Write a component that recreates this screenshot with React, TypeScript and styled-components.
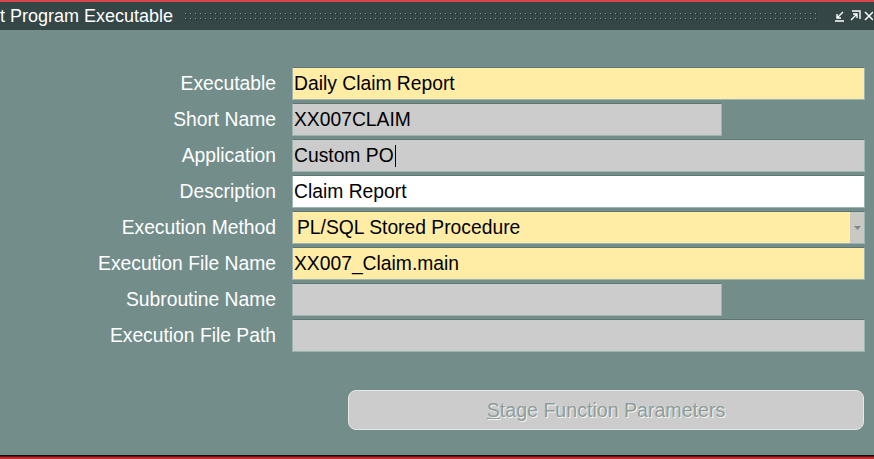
import styled, { createGlobalStyle } from 'styled-components';

const GlobalStyle = createGlobalStyle`
  html, body {
    margin: 0;
    padding: 0;
    background: #728d8a;
    overflow: hidden;
  }
`;

const Window = styled.div`
  width: 874px;
  height: 459px;
  display: flex;
  flex-direction: column;
  background: #728d8a;
  font-family: "Liberation Sans", Arial, sans-serif;
  border-top: 2px solid #d9474a;
  box-sizing: border-box;
  overflow: hidden;
`;

const TitleBar = styled.div`
  height: 28px;
  background: #344646;
  display: flex;
  align-items: center;
  gap: 10px;
  padding-right: 1px;
  flex-shrink: 0;
`;

const Title = styled.span`
  color: #fff;
  font-size: 18px;
  white-space: nowrap;
  margin-left: 0;
`;

const Dots = styled.div`
  flex: 1;
  height: 10px;
  margin-right: 6px;
  background-image:
    radial-gradient(circle, #8a9a98 0.8px, transparent 1px),
    radial-gradient(circle, #1e2a2a 0.8px, transparent 1px);
  background-size: 5px 5px, 5px 5px;
  background-position: 0 0, 1px 1px;
`;

const Controls = styled.div`
  display: flex;
  align-items: center;
  gap: 3px;
`;

const Body = styled.div`
  flex: 1;
  display: flex;
  flex-direction: column;
  padding-top: 37px;
`;

const Form = styled.div`
  display: grid;
  grid-template-columns: 276px 1fr;
  column-gap: 16px;
  row-gap: 3px;
  padding-right: 9px;
`;

const Label = styled.div`
  color: #fff;
  font-size: 19.3px;
  text-align: right;
  display: flex;
  align-items: center;
  justify-content: flex-end;
  height: 33px;
`;

const Field = styled.div<{ $bg: string; $short?: boolean }>`
  height: 33px;
  box-sizing: border-box;
  width: ${(p) => (p.$short ? '430px' : '573px')};
  background: ${(p) => p.$bg};
  border: 1px solid #9fb3b0;
  border-top-color: #5f7572;
  display: flex;
  align-items: center;
  padding-left: 1px;
  font-size: 19.3px;
  color: #000;
  position: relative;
`;

const Caret = styled.span`
  display: inline-block;
  width: 1px;
  height: 22px;
  background: #000;
  margin-left: 1px;
`;

const SelectArrow = styled.div`
  position: absolute;
  right: 0;
  top: 0;
  bottom: 0;
  width: 14px;
  background: #c9c9c4;
  display: flex;
  align-items: center;
  justify-content: center;
`;

const ButtonRow = styled.div`
  display: flex;
  padding-left: 348px;
  padding-top: 38px;
`;

const StageButton = styled.div`
  width: 516px;
  height: 40px;
  box-sizing: border-box;
  border-radius: 8px;
  background: #cccccc;
  border: 1px solid #e6e6e6;
  display: flex;
  align-items: center;
  justify-content: center;
  font-size: 19.6px;
  color: #8d9d9b;
  text-shadow: 1px 1px 0 #f4f4f4;
`;

const Underline = styled.span`
  text-decoration: underline;
`;

const BottomEdge = styled.div`
  height: 4px;
  box-sizing: border-box;
  border-top: 1px solid #111;
  border-bottom: 2px solid #c8242a;
  background: #5a1a1a;
  flex-shrink: 0;
  margin-top: auto;
`;

const rows: { label: string; value?: string; bg: string; short?: boolean; caret?: boolean; select?: boolean; indent?: number }[] = [
  { label: 'Executable', value: 'Daily Claim Report', bg: '#ffeda6' },
  { label: 'Short Name', value: 'XX007CLAIM', bg: '#cccccc', short: true },
  { label: 'Application', value: 'Custom PO', bg: '#cccccc', caret: true },
  { label: 'Description', value: 'Claim Report', bg: '#ffffff' },
  { label: 'Execution Method', value: 'PL/SQL Stored Procedure', bg: '#ffeda6', select: true, indent: 4 },
  { label: 'Execution File Name', value: 'XX007_Claim.main', bg: '#ffeda6' },
  { label: 'Subroutine Name', bg: '#cccccc', short: true },
  { label: 'Execution File Path', bg: '#cccccc' },
];

export default function App() {
  return (
    <>
      <GlobalStyle />
      <Window>
        <TitleBar>
          <Title>t Program Executable</Title>
          <Dots />
          <Controls>
            <svg width="12" height="12" viewBox="0 0 12 12">
              <path d="M9 2 L3 8 M3 4 V8 H7 M1 11 H10" stroke="#fff" strokeWidth="1.4" fill="none" />
            </svg>
            <svg width="12" height="12" viewBox="0 0 12 12">
              <path d="M2 10 L8 4 M4 4 H8 V8 M3 1 H11 V9" stroke="#fff" strokeWidth="1.4" fill="none" />
            </svg>
            <svg width="9" height="12" viewBox="0 0 9 12">
              <path d="M1 2 L9 10 M9 2 L1 10" stroke="#fff" strokeWidth="1.5" fill="none" />
            </svg>
          </Controls>
        </TitleBar>
        <Body>
          <Form>
            {rows.map((r) => (
              <>
                <Label key={r.label + '-l'}>{r.label}</Label>
                <Field key={r.label + '-f'} $bg={r.bg} $short={r.short} style={r.indent ? { paddingLeft: r.indent } : undefined}>
                  {r.value}
                  {r.caret && <Caret />}
                  {r.select && (
                    <SelectArrow>
                      <svg width="7" height="4" viewBox="0 0 7 4">
                        <path d="M0 0 H7 L3.5 4 Z" fill="#7d8a88" />
                      </svg>
                    </SelectArrow>
                  )}
                </Field>
              </>
            ))}
          </Form>
          <ButtonRow>
            <StageButton>
              <span>
                <Underline>S</Underline>tage Function Parameters
              </span>
            </StageButton>
          </ButtonRow>
          <BottomEdge />
        </Body>
      </Window>
    </>
  );
}
